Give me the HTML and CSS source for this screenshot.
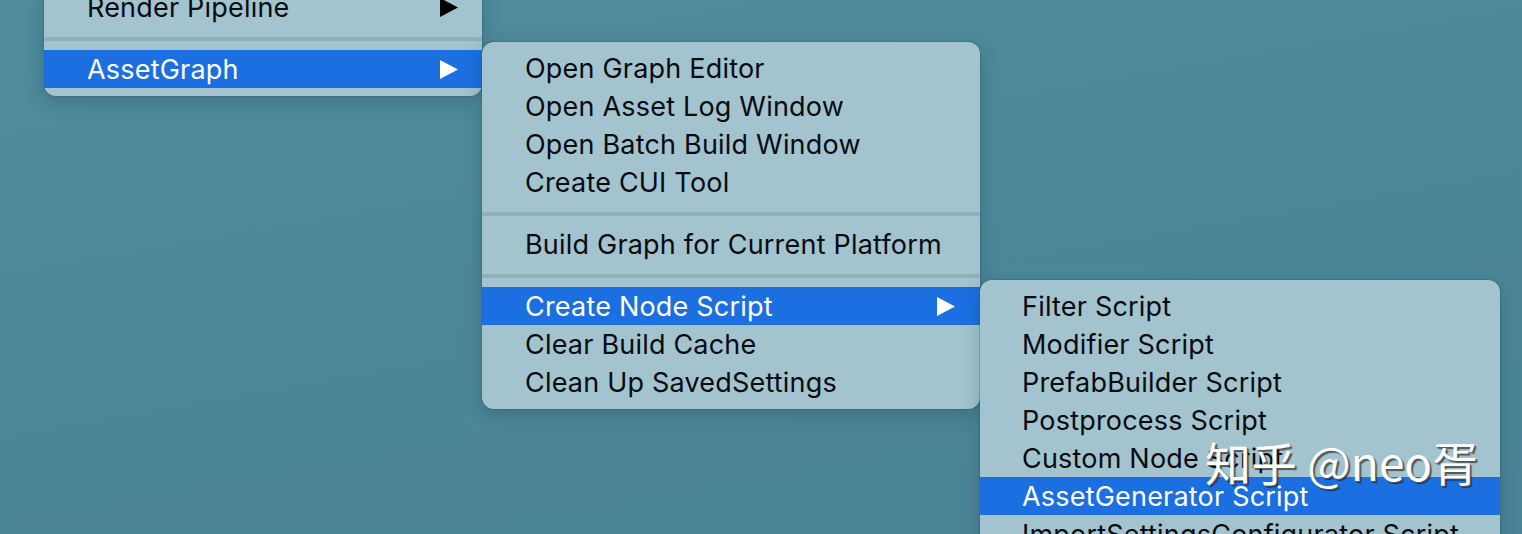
FILE: index.html
```html
<!DOCTYPE html>
<html lang="en">
<head>
<meta charset="utf-8">
<title>AssetGraph menu</title>
<link rel="stylesheet" href="styles.css">
</head>
<body>
<div class="desktop">
  <div class="menu menu-main">
    <div class="item"><span class="label">Render Pipeline</span><svg class="arrow" viewBox="0 0 18 19"><polygon points="0,0 18,9.5 0,19"/></svg></div>
    <div class="sep"></div>
    <div class="item active"><span class="label">AssetGraph</span><svg class="arrow" viewBox="0 0 18 19"><polygon points="0,0 18,9.5 0,19"/></svg></div>
  </div>

  <div class="menu menu-asset">
    <div class="item"><span class="label">Open Graph Editor</span></div>
    <div class="item"><span class="label">Open Asset Log Window</span></div>
    <div class="item"><span class="label">Open Batch Build Window</span></div>
    <div class="item"><span class="label">Create CUI Tool</span></div>
    <div class="sep"></div>
    <div class="item"><span class="label">Build Graph for Current Platform</span></div>
    <div class="sep"></div>
    <div class="item active"><span class="label">Create Node Script</span><svg class="arrow" viewBox="0 0 18 19"><polygon points="0,0 18,9.5 0,19"/></svg></div>
    <div class="item"><span class="label">Clear Build Cache</span></div>
    <div class="item"><span class="label">Clean Up SavedSettings</span></div>
  </div>

  <div class="menu menu-node">
    <div class="item"><span class="label">Filter Script</span></div>
    <div class="item"><span class="label">Modifier Script</span></div>
    <div class="item"><span class="label">PrefabBuilder Script</span></div>
    <div class="item"><span class="label">Postprocess Script</span></div>
    <div class="item"><span class="label">Custom Node Script</span></div>
    <div class="item active"><span class="label">AssetGenerator Script</span></div>
    <div class="item"><span class="label">ImportSettingsConfigurator Script</span></div>
  </div>

  <div class="watermark">知乎 @neo胥</div>
</div>
</body>
</html>
```

FILE: styles.css
```css
html, body {
  margin: 0;
  padding: 0;
}

body {
  width: 1522px;
  height: 534px;
  overflow: hidden;
  font-family: "Inter", "Liberation Sans", sans-serif;
}

.desktop {
  position: relative;
  width: 1522px;
  height: 534px;
  overflow: hidden;
  background: linear-gradient(170deg, #4f8c9c 0%, #4c8798 50%, #4a8397 100%);
}

.menu {
  position: absolute;
  display: flex;
  flex-direction: column;
  padding: 7px 0 8px;
  background: #a3c3ce;
  border-radius: 12px;
  box-shadow: 0 0 0 1px rgba(40, 80, 95, 0.25), 0 6px 18px rgba(20, 50, 60, 0.25);
}

.menu-main {
  left: 44px;
  top: -19px;
  width: 438px;
}

.menu-asset {
  left: 482px;
  top: 42px;
  width: 498px;
}

.menu-node {
  left: 980px;
  top: 280px;
  width: 520px;
  height: 320px;
}

.item {
  display: flex;
  align-items: center;
  justify-content: space-between;
  height: 38px;
  padding: 0 24px 0 43px;
  color: #080c10;
  font-size: 27px;
  letter-spacing: 0.2px;
  line-height: 38px;
}

.menu-node .item {
  padding-left: 42px;
}

.item.active {
  background: #1b6fe0;
  color: #ffffff;
}

.label {
  white-space: nowrap;
  padding-top: 2px;
}

.arrow {
  width: 18px;
  height: 19px;
  fill: #000;
}

.item.active .arrow {
  fill: #ffffff;
}

.menu-asset .arrow {
  margin-right: 1px;
}

.sep {
  height: 4px;
  margin: 11px 0 9px;
  background: #8fb0bc;
}

.watermark {
  position: absolute;
  left: 1205px;
  top: 431px;
  font-family: "Noto Sans CJK SC", "Noto Sans", sans-serif;
  font-size: 46px;
  line-height: 60px;
  color: #ffffff;
  white-space: nowrap;
  text-shadow: 1px 1px 0 #5a5a5a, 2px 2px 1px rgba(0, 0, 0, 0.55);
}
```
